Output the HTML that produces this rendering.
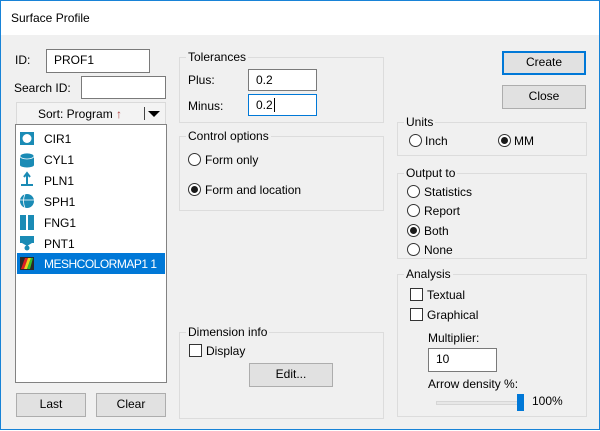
<!DOCTYPE html>
<html><head><style>
*{box-sizing:border-box;margin:0;padding:0}
body{width:600px;height:430px;overflow:hidden;font-family:"Liberation Sans",sans-serif;font-size:12px;color:#000;background:#fff}
.win{position:absolute;left:0;top:0;width:600px;height:430px;border:1px solid #1883d7;background:#f0f0f0}
.title{position:absolute;left:0;top:0;width:598px;height:34px;background:#fff}
.a{position:absolute;white-space:nowrap}
.inp{position:absolute;background:#fff;border:1px solid #7a7a7a;padding:3px 0 0 7px}
.btn{position:absolute;background:#e1e1e1;border:1px solid #adadad;text-align:center;line-height:21px}
.grp{position:absolute;border:1px solid #dcdcdc}
.lg{position:absolute;top:-8px;left:6px;background:#f0f0f0;padding:0 2px}
.rad{position:absolute;width:13px;height:13px;border:1px solid #333;border-radius:50%;background:#fff}
.rad.on::after{content:"";position:absolute;left:2px;top:2px;width:7px;height:7px;border-radius:50%;background:#1a1a1a}
.chk{position:absolute;width:13px;height:13px;border:1px solid #333;background:#fff}
</style></head><body><div class="win">
<div class="title"></div>
<div class="a" style="left:10px;top:10px;font-size:12px">Surface Profile</div>

<div class="a" style="left:14px;top:52px">ID:</div>
<div class="inp" style="left:45px;top:48px;width:104px;height:24px">PROF1</div>
<div class="a" style="left:13px;top:80px">Search ID:</div>
<div class="inp" style="left:80px;top:75px;width:85px;height:23px"></div>
<div class="a" style="left:15px;top:101px;width:150px;height:22px;background:#f3f3f3;border:1px solid #dadada;border-bottom:none"></div>
<div class="a" style="left:37px;top:106px">Sort: Program <span style="color:#b04040">↑</span></div>
<div class="a" style="left:143px;top:106px;width:1px;height:13px;background:#444"></div>
<div class="a" style="left:147px;top:110px;width:0;height:0;border-left:6px solid transparent;border-right:6px solid transparent;border-top:6px solid #000"></div>
<div class="a" style="left:14px;top:123px;width:152px;height:259px;background:#fff;border:1px solid #828282"></div>
<svg class="a" style="left:0;top:0" width="600" height="430">
<rect x="19" y="131" width="14" height="13" fill="#1a8bb5"/><circle cx="26" cy="137.5" r="4.5" fill="#fff"/>
<rect x="19" y="155" width="14" height="9" fill="#1a8bb5"/><ellipse cx="26" cy="155" rx="7" ry="3" fill="#1a8bb5" stroke="#fff" stroke-width="0.8"/><ellipse cx="26" cy="164" rx="7" ry="2.5" fill="#1a8bb5"/>
<path d="M26 173v10M23 176l3-4 3 4M20 184h12" stroke="#1a8bb5" stroke-width="2" fill="none"/>
<circle cx="26" cy="200" r="7" fill="#1a8bb5"/><path d="M24 193q-3 7 0 14M19 199h14" stroke="#fff" stroke-width="0.8" fill="none"/>
<rect x="19" y="214" width="6" height="15" fill="#1a8bb5"/><rect x="27" y="214" width="6" height="15" fill="#1a8bb5"/>
<rect x="19" y="235" width="14" height="7" fill="#1a8bb5"/><path d="M21 242l5 3 5-3" fill="#1a8bb5"/><circle cx="26" cy="247" r="2.5" fill="#1a8bb5"/>
<rect x="16" y="252" width="148" height="21" fill="#0078d7"/>
<rect x="19" y="256" width="14" height="13" fill="#2a2a2a"/><path d="M20 268l4-11h3l-4 11z" fill="#e02020"/><path d="M23 268l4-11h3l-4 11z" fill="#f0d020"/><path d="M26 268l4-11h2l-3 11z" fill="#30c030"/>
</svg>
<div class="a" style="left:43px;top:131px">CIR1</div>
<div class="a" style="left:43px;top:152px">CYL1</div>
<div class="a" style="left:43px;top:173px">PLN1</div>
<div class="a" style="left:43px;top:194px">SPH1</div>
<div class="a" style="left:43px;top:215px">FNG1</div>
<div class="a" style="left:43px;top:236px">PNT1</div>
<div class="a" style="left:43px;top:256px;color:#fff;letter-spacing:-0.5px">MESHCOLORMAP1 1</div>
<div class="btn" style="left:15px;top:392px;width:70px;height:24px">Last</div>
<div class="btn" style="left:95px;top:392px;width:70px;height:24px">Clear</div>

<div class="grp" style="left:178px;top:56px;width:205px;height:66px"><span class="lg">Tolerances</span></div>
<div class="a" style="left:187px;top:72px">Plus:</div>
<div class="inp" style="left:247px;top:68px;width:69px;height:22px">0.2</div>
<div class="a" style="left:187px;top:98px">Minus:</div>
<div class="inp" style="left:247px;top:93px;width:69px;height:22px;border-color:#0078d7">0.2<span style="border-left:1px solid #000;margin-left:1px"></span></div>
<div class="grp" style="left:178px;top:135px;width:205px;height:75px"><span class="lg">Control options</span></div>
<div class="rad" style="left:187px;top:152px"></div><div class="a" style="left:204px;top:152px">Form only</div>
<div class="rad on" style="left:187px;top:182px"></div><div class="a" style="left:204px;top:182px">Form and location</div>
<div class="grp" style="left:178px;top:331px;width:205px;height:87px"><span class="lg">Dimension info</span></div>
<div class="chk" style="left:188px;top:343px"></div><div class="a" style="left:205px;top:343px">Display</div>
<div class="btn" style="left:248px;top:362px;width:84px;height:24px">Edit...</div>

<div class="btn" style="left:501px;top:50px;width:84px;height:24px;border:2px solid #0078d7;line-height:19px">Create</div>
<div class="btn" style="left:501px;top:84px;width:84px;height:24px">Close</div>
<div class="grp" style="left:396px;top:121px;width:190px;height:34px"><span class="lg">Units</span></div>
<div class="rad" style="left:408px;top:133px"></div><div class="a" style="left:424px;top:133px">Inch</div>
<div class="rad on" style="left:497px;top:133px"></div><div class="a" style="left:513px;top:133px">MM</div>
<div class="grp" style="left:396px;top:172px;width:190px;height:86px"><span class="lg">Output to</span></div>
<div class="rad" style="left:406px;top:184px"></div><div class="a" style="left:423px;top:184px">Statistics</div>
<div class="rad" style="left:406px;top:203px"></div><div class="a" style="left:423px;top:203px">Report</div>
<div class="rad on" style="left:406px;top:223px"></div><div class="a" style="left:423px;top:223px">Both</div>
<div class="rad" style="left:406px;top:242px"></div><div class="a" style="left:423px;top:242px">None</div>
<div class="grp" style="left:396px;top:273px;width:190px;height:143px"><span class="lg">Analysis</span></div>
<div class="chk" style="left:409px;top:287px"></div><div class="a" style="left:426px;top:287px">Textual</div>
<div class="chk" style="left:409px;top:307px"></div><div class="a" style="left:426px;top:307px">Graphical</div>
<div class="a" style="left:427px;top:330px">Multiplier:</div>
<div class="inp" style="left:427px;top:347px;width:69px;height:24px">10</div>
<div class="a" style="left:427px;top:376px">Arrow density %:</div>
<div class="a" style="left:435px;top:400px;width:86px;height:4px;background:#e7e7e7;border:1px solid #d6d6d6"></div>
<div class="a" style="left:516px;top:393px;width:7px;height:17px;background:#0078d7"></div>
<div class="a" style="left:531px;top:393px">100%</div>
</div></body></html>
